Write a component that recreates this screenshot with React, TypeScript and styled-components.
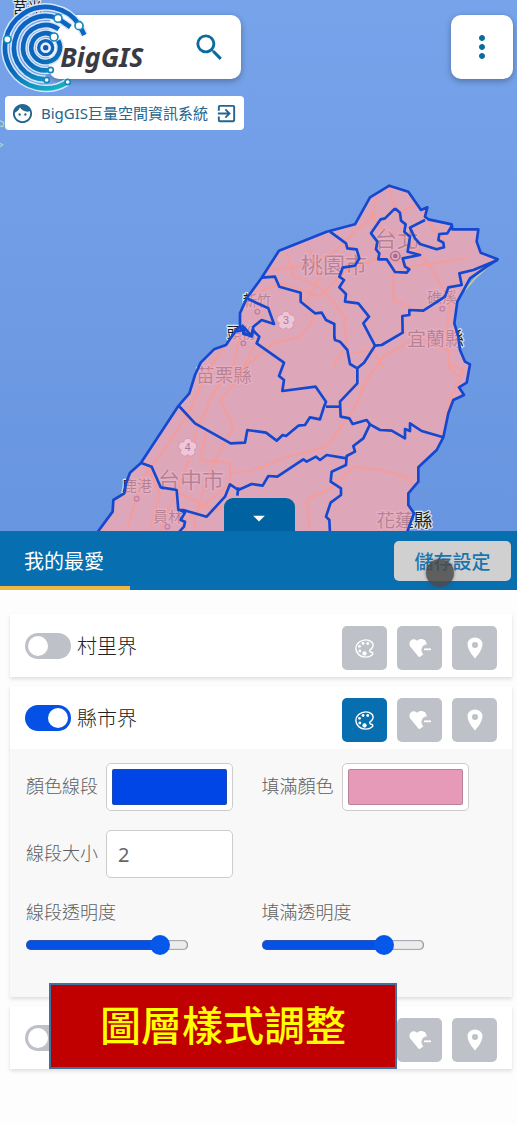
import React, { useState } from "react";
import styled, { createGlobalStyle } from "styled-components";
import { MdSearch, MdMoreVert, MdFace, MdExitToApp, MdArrowDropDown } from "react-icons/md";
import { IoColorPaletteOutline, IoLocationSharp } from "react-icons/io5";

const SANS = '"Noto Sans", "Noto Sans CJK TC", sans-serif';
const CJK = '"Noto Sans CJK TC", sans-serif';

const GlobalStyle = createGlobalStyle`
  *, *::before, *::after { box-sizing: border-box; }
  body { margin: 0; background: #fdfdfd; font-family: ${CJK}; color: #222; }
  button, input { font: inherit; }
`;

const Page = styled.div`
  min-height: 100vh;
  display: flex;
  flex-direction: column;
`;

/* ---------- map ---------- */

const MapArea = styled.section`
  display: grid;
  grid-template: 531px / 1fr;
  overflow: hidden;
  & > * { grid-area: 1 / 1; min-width: 0; }
`;

const MapSvg = styled.svg`
  display: block;
  width: 100%;
  height: 100%;
`;

const MapControls = styled.div`
  z-index: 1;
  display: flex;
  flex-direction: column;
  justify-content: space-between;
  padding: 8px 4px 0 5px;
`;

const TopRow = styled.div`
  display: flex;
  justify-content: space-between;
  align-items: flex-start;
`;

const SearchBar = styled.div`
  display: grid;
  width: 236px;
  height: 88px;
  & > * { grid-area: 1 / 1; }
`;

const SearchCard = styled.div`
  display: flex;
  align-items: center;
  justify-content: flex-end;
  height: 64px;
  margin: 7px 0 0 44px;
  padding-right: 14px;
  border-radius: 10px;
  background: #fff;
  box-shadow: 0 2px 6px rgba(0, 0, 0, 0.3);
`;

const PlainButton = styled.button`
  display: flex;
  padding: 0;
  border: 0;
  background: none;
  color: #0b6b9f;
  cursor: pointer;
`;

const LogoSvg = styled.svg`
  width: 160px;
  height: 88px;
  overflow: visible;
  pointer-events: none;
`;

const MenuButton = styled.button`
  display: flex;
  align-items: center;
  justify-content: center;
  width: 62px;
  height: 64px;
  margin-top: 7px;
  padding: 0;
  border: 0;
  border-radius: 10px;
  background: #fff;
  color: #0b6b9f;
  box-shadow: 0 2px 6px rgba(0, 0, 0, 0.3);
`;

const AccountLink = styled.a`
  display: flex;
  align-items: center;
  gap: 7px;
  width: max-content;
  height: 34px;
  padding: 0 6px;
  border-radius: 4px;
  background: #fff;
  color: #24668f;
  font: 15px/34px ${SANS};
  text-decoration: none;
`;

const TopControls = styled.div``;

const CollapseButton = styled.button`
  display: flex;
  align-items: center;
  justify-content: center;
  align-self: center;
  width: 71px;
  height: 33px;
  padding: 6px 0 0;
  border: 0;
  border-radius: 9px 9px 0 0;
  background: #0062a0;
  color: #fff;
`;

/* ---------- tab bar ---------- */

const TabBar = styled.nav`
  display: flex;
  justify-content: space-between;
  align-items: center;
  height: 59px;
  padding-right: 6px;
  background: #076eaf;
`;

const Tab = styled.button`
  align-self: stretch;
  padding: 4px 26px 0 24px;
  border: 0;
  border-bottom: 4px solid #f0b840;
  background: none;
  color: #fff;
  font-size: 20px;
`;

const SaveButton = styled.button`
  position: relative;
  width: 117px;
  height: 40px;
  padding: 0;
  border: 0;
  border-radius: 5px;
  background: #d0d0d1;
  color: #1a74ae;
  font-size: 19px;
  font-weight: 500;
  line-height: 36px;
`;

const TouchDot = styled.span`
  position: absolute;
  left: 32px;
  bottom: -6px;
  width: 28px;
  height: 28px;
  border-radius: 50%;
  background: rgba(75, 75, 75, 0.85);
  box-shadow: 0 0 3px rgba(75, 75, 75, 0.7);
`;

/* ---------- layer list ---------- */

const LayerList = styled.main`
  display: flex;
  flex-direction: column;
  gap: 9px;
  padding: 24px 5px 24px 10px;
`;

const Card = styled.article`
  position: relative;
  background: #fff;
  box-shadow: 0 2px 4px rgba(0, 0, 0, 0.13);
`;

const CardHead = styled.header`
  display: flex;
  align-items: center;
  justify-content: space-between;
  height: 63px;
  padding: 5px 15px 0;
`;

const ToggleLabel = styled.label`
  display: flex;
  align-items: center;
  gap: 6px;
  padding-bottom: 4px;
  font-size: 20px;
  font-weight: 300;
  line-height: 28px;
`;

const Toggle = styled.input`
  appearance: none;
  width: 46px;
  height: 26px;
  margin: 0;
  padding: 3px;
  border-radius: 13px;
  background: #bfc1c8;
  &::before {
    content: "";
    display: block;
    width: 20px;
    height: 20px;
    border-radius: 50%;
    background: #fff;
  }
  &:checked { background: #0551e6; }
  &:checked::before { margin-left: auto; }
`;

const Actions = styled.div`
  display: flex;
  gap: 10px;
`;

const ActionButton = styled.button<{ $active?: boolean }>`
  display: flex;
  align-items: center;
  justify-content: center;
  width: 45px;
  height: 44px;
  padding: 0;
  border: 0;
  border-radius: 5px;
  background: ${(p) => (p.$active ? "#076eaf" : "#bfc1c9")};
  color: #fff;
`;

const CardBody = styled.div`
  display: grid;
  grid-template-columns: 1fr 1fr;
  row-gap: 19px;
  padding: 14px 15px 42px 16px;
  background: #f8f8f8;
`;

const Field = styled.div<{ $wide?: boolean }>`
  grid-column: ${(p) => (p.$wide ? "1 / -1" : "auto")};
  display: flex;
  align-items: center;
  gap: 8px;
  color: #606060;
  font-size: 18px;
  font-weight: 300;
  line-height: 28px;
  & > label { padding-bottom: 4px; }
`;

const SliderField = styled(Field)`
  flex-direction: column;
  align-items: flex-start;
  gap: 6px;
`;

const NumberInput = styled.input`
  width: 127px;
  height: 48px;
  padding: 0 11px;
  border: 1px solid #ccc;
  border-radius: 5px;
  background: #fff;
  color: #666;
  font: 20px ${SANS};
`;

const ColorInput = styled.input`
  appearance: none;
  width: 127px;
  height: 48px;
  padding: 5px;
  border: 1px solid #ccc;
  border-radius: 5px;
  background: #fff;
  &::-webkit-color-swatch-wrapper { padding: 0; }
  &::-webkit-color-swatch { border: 1px solid rgba(80, 80, 80, 0.3); border-radius: 2px; }
`;

const Slider = styled.input<{ $fill: number }>`
  appearance: none;
  width: 162px;
  height: 20px;
  margin: 0;
  background: none;
  &::-webkit-slider-runnable-track {
    height: 10px;
    border-radius: 5px;
    background: linear-gradient(to right, #0551e6 ${(p) => p.$fill}%, #ececec ${(p) => p.$fill}%);
    box-shadow: inset 0 0 0 1px #9a9a9a;
    box-shadow: inset -1px 0 0 #9a9a9a, inset 0 0 1px 1px rgba(90, 90, 110, 0.5);
  }
  &::-webkit-slider-thumb {
    appearance: none;
    width: 20px;
    height: 20px;
    margin-top: -5px;
    border-radius: 50%;
    background: #0558ea;
  }
`;

const Caption = styled.div`
  position: absolute;
  left: 39px;
  bottom: 0;
  display: flex;
  align-items: center;
  height: 86px;
  padding: 0 49px 6px;
  border: 2px solid #41719c;
  background: #c00000;
  color: #ff0;
  font-size: 41px;
  font-weight: 500;
  white-space: nowrap;
`;

/* ---------- drawings ---------- */

const LAND =
  "295,1593 338,1535 340,1500 373,1480 378,1450 390,1418 422,1390 535,1218 568,1180 585,1125 602,1088 642,1048 678,1035 705,995 720,980 720,940 740,895 785,833 837,752 980,695 1065,673 1110,592 1168,557 1225,575 1263,630 1282,622 1275,650 1285,658 1355,673 1357,688 1435,688 1430,725 1442,758 1493,778 1460,800 1410,835 1372,905 1363,970 1375,1010 1380,1050 1395,1085 1410,1093 1400,1148 1377,1162 1392,1185 1360,1200 1345,1240 1330,1312 1310,1350 1255,1402 1255,1445 1225,1480 1225,1515 1242,1540 1220,1600 295,1600";

const NORTH_BORDERS = [
  "270,185 318,220 322,235 350,238 358,265 345,287 308,293 298,320 312,330 298,352 318,372 315,395 355,400 387,440 370,460 405,527 425,525 488,488 487,438 508,435 508,420 550,422 592,395 615,380 625,352 665,345 658,310 700,300 773,270",
  "465,115 480,128 483,152 497,163 493,185 510,200 503,245 540,255 488,265 495,290 508,298 500,308 465,306 440,268 415,268 418,250 408,238 412,215 393,190 422,148 435,145 465,115",
  "555,150 510,173 525,205 540,222 590,238 612,232 610,218 595,210 598,192 622,190 637,165",
  "65,323 105,320 118,350 182,368 182,395 225,430 245,428 258,450 283,462 283,505",
  "20,385 85,415 102,462 65,450 40,470 35,500 15,490 0,470",
];

const SOUTH_BORDERS = [
  "225,5 250,0 250,12 275,18 278,0 298,20 290,40 372,98 357,138 372,150 367,183 467,170 498,215 492,230 480,268 450,262 435,285 415,287 378,318 368,315 350,332 318,308 262,300 255,338 212,340 105,280 57,228",
  "275,18 245,-15",
  "498,230 540,230",
  "523,20 525,30 540,35 562,60 570,102 592,115 592,160 540,215 542,260 568,265 578,282 620,270 630,283 660,300 695,302 735,325 735,297 750,303 750,280 785,303 850,322",
  "592,115 612,98 645,47",
  "630,283 610,325 580,348 585,365 560,378 558,405 515,425 512,455 543,475 543,495 512,518 498,560 508,570 510,610",
  "560,385 500,375 480,390 468,380 440,395 430,388 352,440 325,438 308,467 275,462 235,480 210,463 195,500 140,560 70,540 55,540 50,480 2,472 -25,410 -58,398",
  "235,472 232,497",
  "60,540 75,548 62,570 75,575 72,590 58,605",
];

const ROADS = [
  "1130,590 1115,650 1150,690 1230,720 1290,800 1350,900 1340,1000 1350,1110 1380,1130",
  "1165,560 1190,640 1260,610 1300,690 1340,720",
  "800,810 900,800 1000,760 1060,700 1130,640",
  "760,880 850,850 960,890 1040,810 1150,770 1230,800 1400,775",
  "1180,820 1180,900 1230,920",
  "930,750 960,830 920,900 940,960 900,1010 820,1030 760,1080 700,1130",
  "860,760 880,830 960,860 1010,920 1040,960",
  "720,1000 700,1100 640,1180 590,1290 560,1400 520,1500 480,1590",
  "760,1040 720,1130 660,1200 700,1280 640,1390 600,1500 580,1590",
  "690,1010 620,1120 570,1230 500,1340 430,1430 380,1590",
  "550,1240 620,1290 600,1380 690,1390 690,1450 560,1560",
  "1340,1050 1250,1010 1150,1070 1100,1140 1060,1230 980,1340 860,1370 760,1410 690,1420",
  "1060,1060 1120,1050 1150,1100",
  "1340,1090 1390,1110 1350,1200 1330,1300",
  "930,1590 920,1500 1000,1460 1060,1400 1140,1410 1220,1430 1250,1470",
  "440,1400 480,1480 450,1590",
  "540,1480 640,1530 760,1500 850,1530",
  "1030,960 1040,1030 1000,1100",
];

const PLACES: [string, number, number, number][] = [
  ["莒光", 38, 38, 44],
  ["台北", 1124, 741, 66],
  ["桃園市", 903, 819, 66],
  ["新竹", 728, 918, 43],
  ["頭份", 680, 1014, 45],
  ["礁溪", 1281, 909, 45],
  ["宜蘭縣", 1221, 1038, 57],
  ["苗栗縣", 588, 1146, 56],
  ["台中市", 474, 1464, 66],
  ["鹿港", 366, 1472, 45],
  ["員林", 459, 1565, 45],
  ["花蓮縣", 1129, 1580, 56],
];

const TOWNS = [[772, 935], [730, 1030], [1327, 926], [410, 1496], [502, 1580]];

function RouteBadge({ x, y, n }: { x: number; y: number; n: string }) {
  return (
    <g transform={`translate(${x} ${y})`}>
      {[0, 72, 144, 216, 288].map((a) => (
        <circle key={a} r="13" cy="-15" fill="#efc6d6" stroke="#d79ab4" strokeWidth="3" transform={`rotate(${a})`} />
      ))}
      <circle r="20" fill="#efc6d6" />
      <text textAnchor="middle" y="11" fontSize="32" fill="#a9759a" fontFamily="Liberation Sans, sans-serif">{n}</text>
    </g>
  );
}

function TaiwanMap() {
  return (
    <MapSvg viewBox="0 0 1551 1593" preserveAspectRatio="xMidYMid slice" role="img" aria-label="地圖">
      <defs>
        <linearGradient id="sea" x1="0" y1="0" x2="0" y2="1">
          <stop offset="0" stopColor="#76a3ea" />
          <stop offset="1" stopColor="#6895df" />
        </linearGradient>
        <clipPath id="land"><polygon points={LAND} /></clipPath>
      </defs>
      <rect x="-2000" width="6000" height="1593" fill="url(#sea)" />
      <path d="M0 362l12 6-4 12-8-2M0 430l8 4-8 6" fill="none" stroke="#a7d3c0" strokeWidth="4" />
      <path d="M1480 786L1425 835L1395 870" fill="none" stroke="#b9c9a8" strokeWidth="5" />
      <polygon points={LAND} fill="#c0bcbc" />
      <g clipPath="url(#land)" fill="none" stroke="#ff9c60" strokeWidth="6" strokeLinejoin="round">
        {ROADS.map((r) => <polyline key={r} points={r} />)}
      </g>
      <g fontFamily={CJK} fill="#1c1c22">
        {PLACES.map(([name, x, y, size]) => (
          <text key={name} x={x} y={y} fontSize={size} stroke="#dfe6ea" strokeWidth="7" paintOrder="stroke" strokeLinejoin="round">{name}</text>
        ))}
      </g>
      <polygon points={LAND} fill="#e6a0b8" fillOpacity="0.77" />
      <g clipPath="url(#land)" fill="none" stroke="#fb9a92" strokeWidth="5" strokeOpacity="0.55" strokeLinejoin="round">
        {ROADS.map((r) => <polyline key={r} points={r} />)}
      </g>
      <g fill="none" stroke="#c080a4" strokeWidth="4">
        {TOWNS.map(([x, y]) => <circle key={x} cx={x} cy={y} r="7" />)}
        <circle cx="1186" cy="768" r="14" stroke="#a86a90" />
        <circle cx="1186" cy="768" r="5" fill="#a86a90" stroke="#a86a90" />
      </g>
      <RouteBadge x={858} y={962} n="3" />
      <RouteBadge x={563} y={1343} n="4" />
      <g fill="none" stroke="#1448d0" strokeWidth="8" strokeLinejoin="round">
        <polygon points={LAND} />
        <g transform="translate(720 510)">{NORTH_BORDERS.map((b) => <polyline key={b} points={b} />)}</g>
        <g transform="translate(480 990)">{SOUTH_BORDERS.map((b) => <polyline key={b} points={b} />)}</g>
      </g>
    </MapSvg>
  );
}

/* Arc from angle a to angle b (degrees, clockwise from the right). */
function arc(r: number, a: number, b: number) {
  const at = (t: number) => `${(r * Math.cos((t * Math.PI) / 180)).toFixed(1)} ${(r * Math.sin((t * Math.PI) / 180)).toFixed(1)}`;
  return `M${at(a)}A${r} ${r} 0 ${b - a > 180 ? 1 : 0} 1 ${at(b)}`;
}

function Logo() {
  const rings = [arc(43, -30, 308), arc(68, 77, 305), arc(95, 90, 293) + "L74 -62", arc(122, 58, 326) + "L116 -38"];
  const nodes: [number, number, number][] = [
    [25, -32, 12], [37, -88, 12], [100, -66, 12], [-115, -25, 11], [15, 67, 8], [3, 97, 8], [66, 103, 8],
  ];
  return (
    <LogoSvg viewBox="15 24 480 264" role="img" aria-label="BigGIS">
      <defs>
        <linearGradient id="ring" gradientUnits="userSpaceOnUse" x1="-40" y1="-110" x2="50" y2="120">
          <stop offset="0" stopColor="#0e62c4" />
          <stop offset="0.6" stopColor="#0a68b8" />
          <stop offset="1" stopColor="#16b4c4" />
        </linearGradient>
      </defs>
      <g transform="translate(137 143)" fill="none">
        <g stroke="#d5e6fa" strokeWidth="23">{rings.map((d) => <path key={d} d={d} />)}</g>
        <g stroke="url(#ring)" strokeWidth="14">
          {rings.map((d) => <path key={d} d={d} />)}
        </g>
        <circle r="30" fill="#e6f0fc" />
        <circle r="21" stroke="#0b63bd" strokeWidth="10" />
        <circle r="8" fill="#0b57b4" />
        {nodes.map(([x, y, r]) => <circle key={x} cx={x} cy={y} r={r} fill="#fff" stroke="#1787bd" strokeWidth="5" />)}
      </g>
      <text x="181" y="200" fontFamily={SANS} fontSize="80" fontWeight="700" fontStyle="italic" fill="#3a3a44" stroke="#fff" strokeWidth="8" paintOrder="stroke">BigGIS</text>
    </LogoSvg>
  );
}

function HeartMinus() {
  return (
    <svg width="24" height="24" viewBox="-12 -12 24 24" aria-hidden="true">
      <path
        d="M-3 -7.2C-4.6 -9.2 -7.4 -9.4 -9.2 -7.6C-11 -5.8 -11 -2.8 -9.2 -.8L-1.6 8.4C-1 9.2 0 9.2 .6 8.6L3.4 6.2A5.6 5.6 0 0 1 6.6 -3.6C6.6 -5.4 6 -7 4.6 -8C2.2 -9.6 -1.2 -9.2 -3 -7.2Z"
        fill="#fff"
      />
      <rect x="4" y="0.4" width="7" height="1.8" fill="#fff" />
    </svg>
  );
}

/* ---------- parts ---------- */

type LayerProps = {
  name?: string;
  caption?: string;
  defaultOn?: boolean;
  styling?: boolean;
  children?: React.ReactNode;
};

function Layer({ name, caption, defaultOn, styling, children }: LayerProps) {
  return (
    <Card>
      <CardHead>
        <ToggleLabel>
          <Toggle type="checkbox" defaultChecked={defaultOn} aria-label={name ?? "圖層"} />
          {name}
        </ToggleLabel>
        <Actions>
          {!caption && (
            <ActionButton $active={styling} aria-label="樣式"><IoColorPaletteOutline size={23} /></ActionButton>
          )}
          <ActionButton aria-label="移除最愛"><HeartMinus /></ActionButton>
          <ActionButton aria-label="定位"><IoLocationSharp size={24} /></ActionButton>
        </Actions>
      </CardHead>
      {children}
      {caption && <Caption>{caption}</Caption>}
    </Card>
  );
}

function Opacity({ id, label, initial }: { id: string; label: string; initial: number }) {
  const [value, setValue] = useState(initial);
  return (
    <SliderField>
      <label htmlFor={id}>{label}</label>
      <Slider id={id} type="range" min={0} max={100} value={value} $fill={value} onChange={(e) => setValue(Number(e.target.value))} />
    </SliderField>
  );
}

export default function App() {
  return (
    <Page>
      <GlobalStyle />
      <MapArea>
        <TaiwanMap />
        <MapControls>
          <TopControls>
            <TopRow>
              <SearchBar>
                <SearchCard>
                  <PlainButton aria-label="搜尋"><MdSearch size={35} /></PlainButton>
                </SearchCard>
                <Logo />
              </SearchBar>
              <MenuButton aria-label="選單"><MdMoreVert size={36} /></MenuButton>
            </TopRow>
            <AccountLink href="#account">
              <MdFace size={23} />
              BigGIS巨量空間資訊系統
              <MdExitToApp size={23} />
            </AccountLink>
          </TopControls>
          <CollapseButton aria-label="收合"><MdArrowDropDown size={28} /></CollapseButton>
        </MapControls>
      </MapArea>

      <TabBar>
        <Tab>我的最愛</Tab>
        <SaveButton>儲存設定<TouchDot /></SaveButton>
      </TabBar>

      <LayerList>
        <Layer name="村里界" />
        <Layer name="縣市界" defaultOn styling>
          <CardBody>
            <Field>
              <label htmlFor="line-color">顏色線段</label>
              <ColorInput id="line-color" type="color" defaultValue="#0046e6" />
            </Field>
            <Field>
              <label htmlFor="fill-color">填滿顏色</label>
              <ColorInput id="fill-color" type="color" defaultValue="#e69ab8" />
            </Field>
            <Field $wide>
              <label htmlFor="line-size">線段大小</label>
              <NumberInput id="line-size" inputMode="numeric" defaultValue="2" />
            </Field>
            <Opacity id="line-opacity" label="線段透明度" initial={87} />
            <Opacity id="fill-opacity" label="填滿透明度" initial={79} />
          </CardBody>
        </Layer>
        <Layer caption="圖層樣式調整" />
      </LayerList>
    </Page>
  );
}
